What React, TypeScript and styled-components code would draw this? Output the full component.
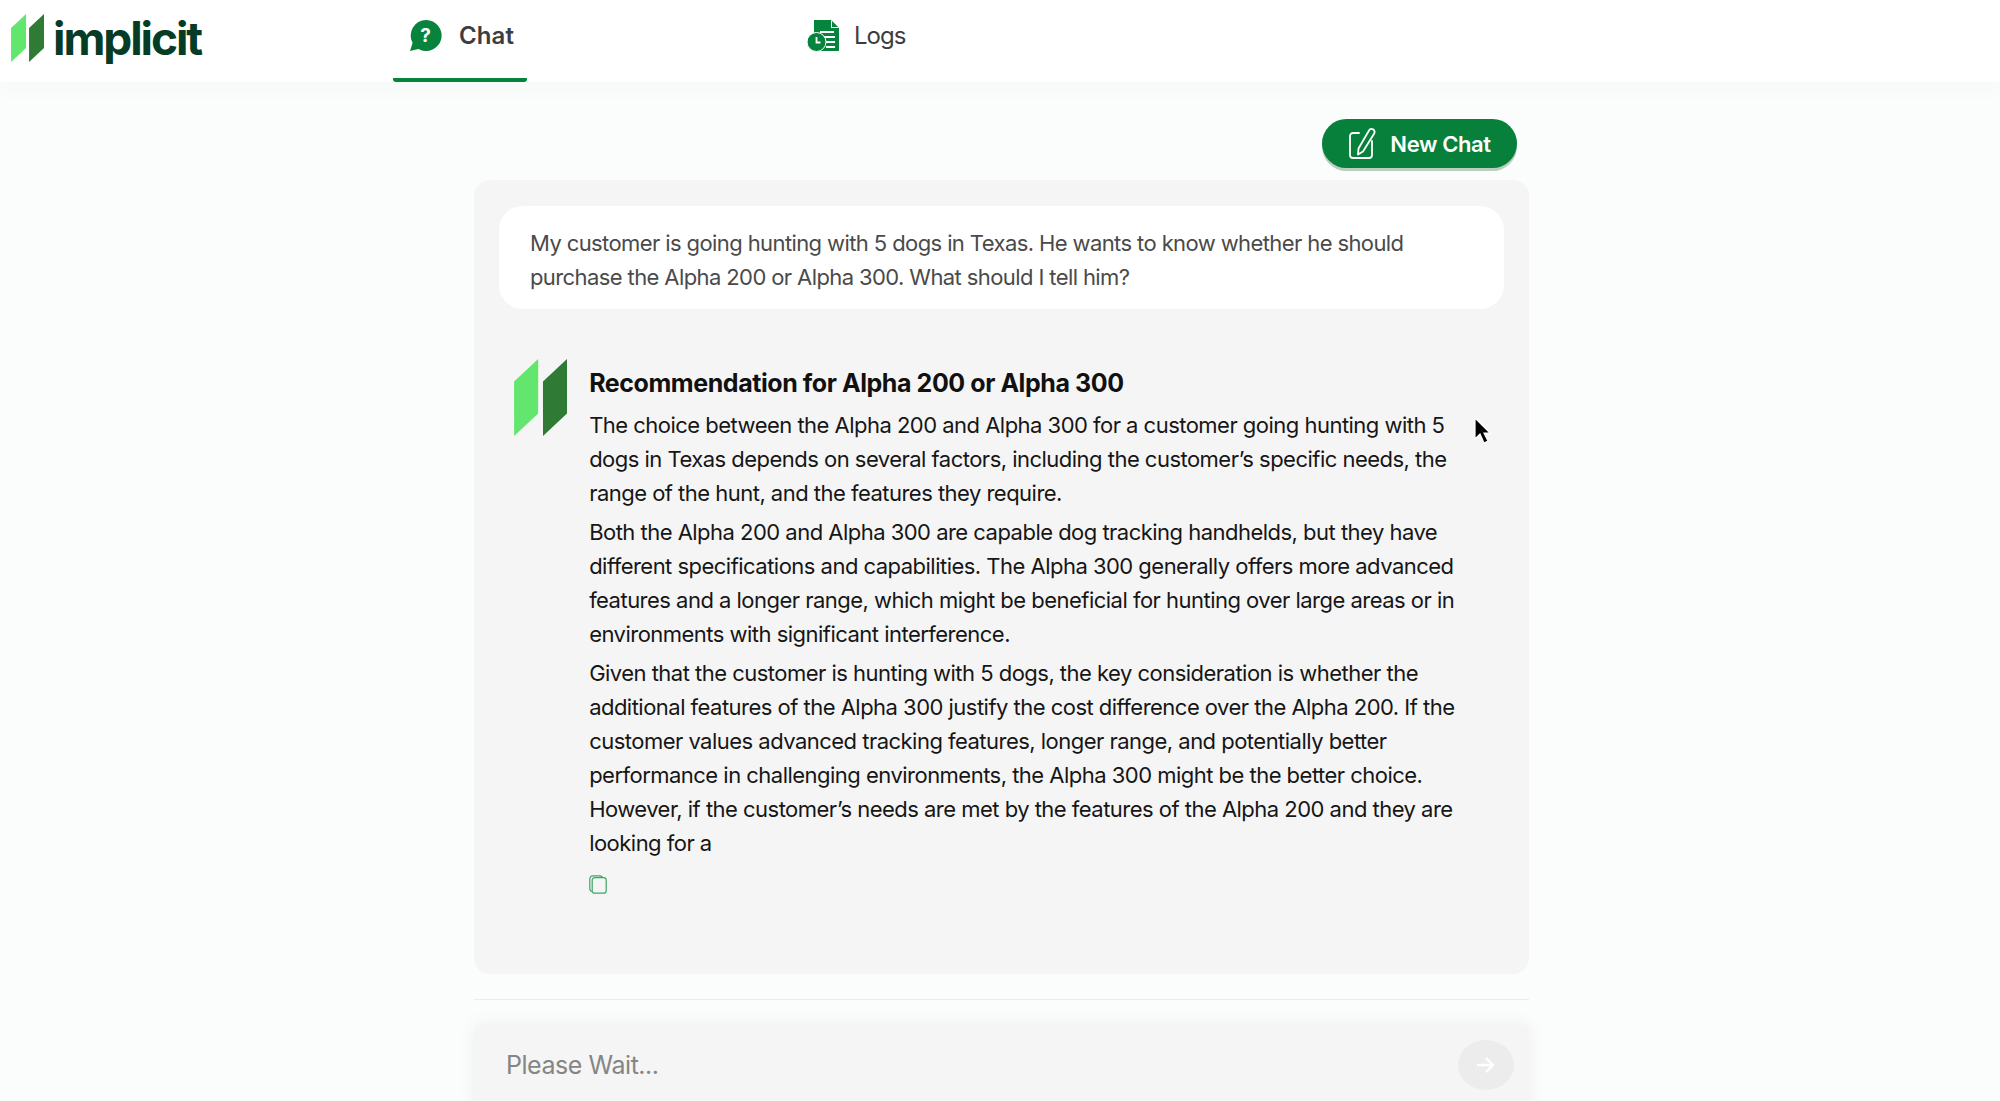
import React from 'react';
import styled, { createGlobalStyle } from 'styled-components';

const GlobalStyle = createGlobalStyle`
  html, body {
    margin: 0;
    height: 100%;
    overflow: hidden;
    background: #fbfdfc;
    font-family: Inter, "Noto Sans", "Liberation Sans", sans-serif;
  }
  * { box-sizing: border-box; }
`;

const Page = styled.div`
  height: 100vh;
  overflow: hidden;
  position: relative;
  display: flex;
  flex-direction: column;
`;

const Header = styled.header`
  height: 82px;
  flex: none;
  background: #fff;
  display: flex;
  align-items: flex-start;
  box-shadow: 0 8px 16px rgba(120, 130, 120, 0.03);
`;

const Logo = styled.div`
  width: 393px;
  flex: none;
  padding: 14px 0 0 11px;
  display: flex;
  align-items: flex-start;
  gap: 9px;
`;

const LogoText = styled.span`
  font-size: 46px;
  line-height: 48px;
  font-weight: 700;
  letter-spacing: -2.1px;
  color: #063b26;
`;

const Tab = styled.div<{ $active?: boolean }>`
  width: 134px;
  height: 82px;
  margin-right: ${p => (p.$active ? '263px' : '0')};
  padding: 0 0 8px ${p => (p.$active ? '16px' : '17px')};
  display: flex;
  align-items: center;
  gap: ${p => (p.$active ? '17px' : '14px')};
  font-size: 24px;
  font-weight: ${p => (p.$active ? 600 : 400)};
  letter-spacing: ${p => (p.$active ? '0.1px' : '-1px')};
  color: #3d3d40;
  border-bottom: 4px solid ${p => (p.$active ? '#06843d' : 'transparent')};
  border-radius: 0 0 3px 3px;
`;

const Main = styled.main`
  width: 1055px;
  margin-left: 474px;
  display: flex;
  flex-direction: column;
`;

const Toolbar = styled.div`
  height: 98px;
  padding: 37px 12px 0 0;
  display: flex;
  justify-content: flex-end;
  align-items: flex-start;
`;

const NewChatButton = styled.button`
  width: 195px;
  height: 49px;
  padding: 0;
  border: 0;
  border-radius: 25px;
  background: #06803a;
  box-shadow: 0 3px 0 rgba(60, 120, 80, 0.35);
  color: #fff;
  font: 600 22px Inter, sans-serif;
  letter-spacing: -0.4px;
  display: flex;
  align-items: center;
  justify-content: center;
  gap: 13px;
`;

const ChatPanel = styled.section`
  height: 794px;
  background: #f5f5f5;
  border-radius: 16px;
  padding: 26px 25px 0;
`;

const UserBubble = styled.div`
  height: 103px;
  background: #fff;
  border-radius: 24px;
  padding: 20px 31px;
  font-size: 22px;
  line-height: 34px;
  letter-spacing: -0.6px;
  color: #4a4a4a;
`;

const Answer = styled.div`
  margin-top: 50px;
  padding-left: 15px;
  display: flex;
  gap: 22px;
`;

const Body = styled.div`
  width: 885px;
  margin-top: 7px;
`;

const Title = styled.h2`
  margin: 0 0 8px;
  font-size: 25px;
  line-height: 34px;
  font-weight: 700;
  letter-spacing: -0.43px;
  color: #111;
`;

const Paragraph = styled.p`
  margin: 0 0 5px;
  font-size: 22px;
  line-height: 34px;
  letter-spacing: -0.52px;
  color: #161616;
`;

const CopyButton = styled.div`
  margin-top: 15px;
  width: 18px;
  height: 18px;
  line-height: 0;
`;

const Divider = styled.hr`
  margin: 25px 0;
  border: 0;
  border-top: 1px solid #ececec;
`;

const InputBar = styled.div`
  height: 100px;
  background: #f5f5f5;
  border-radius: 6px 6px 0 0;
  box-shadow: 0 0 16px rgba(120, 120, 120, 0.1);
  padding: 15px 15px 0 32px;
  display: flex;
  align-items: flex-start;
  justify-content: space-between;
`;

const Placeholder = styled.span`
  font-size: 25px;
  line-height: 50px;
  letter-spacing: -0.45px;
  color: #858585;
`;

const SendButton = styled.div`
  width: 56px;
  height: 50px;
  border-radius: 50%;
  background: #ececec;
  display: flex;
  align-items: center;
  justify-content: center;
`;

const Cursor = styled.svg`
  position: absolute;
  left: 1473px;
  top: 416px;
`;

const LogoMark = ({ size }: { size: number }) => (
  <svg width={size * 0.69} height={size} viewBox="0 0 33 48">
    <polygon points="0,14 15,0 15,34 0,48" fill="#63e66d" />
    <polygon points="18,14 33,0 33,34 18,48" fill="#2f7a35" />
  </svg>
);

const ChatIcon = () => (
  <svg width="33" height="33" viewBox="0 0 33 33">
    <path d="M17 1a15.5 15.5 0 1 1-7.5 29L1 32l2.6-8A15.5 15.5 0 0 1 17 1z" fill="#06843d" />
    <text x="16.700" y="23" textAnchor="middle" fontSize="19" fontWeight="700" fontFamily="Inter, sans-serif" fill="#fff">?</text>
  </svg>
);

const LogsIcon = () => (
  <svg width="33" height="33" viewBox="0 0 33 33">
    <path d="M7 1h17l8 8v23H11v-3H7z" fill="#06843d" />
    <path d="M24 1l8 8h-8z" fill="#fff" />
    <path d="M25 2l6 6h-6z" fill="#06843d" />
    <g stroke="#fff" strokeWidth="2">
      <path d="M13 13h14M17 18h11M19 23h9M19 28h9" />
    </g>
    <circle cx="9.500" cy="23" r="9.500" fill="#06843d" stroke="#fff" strokeWidth="1" />
    <path d="M9.500 18v5.500h4" stroke="#fff" strokeWidth="1.8" fill="none" />
  </svg>
);

const PenIcon = () => (
  <svg width="29" height="33" viewBox="0 0 29 33" fill="none" stroke="#fff" strokeWidth="1.8" strokeLinecap="round" strokeLinejoin="round">
    <path d="M11 6H5a3 3 0 0 0-3 3v19a3 3 0 0 0 3 3h16a3 3 0 0 0 3-3V14" />
    <path d="M21 3.500a3 3 0 0 1 5.200 3L15 24.500l-5 3 .5-6z" />
  </svg>
);

const CopyIcon = () => (
  <svg width="18" height="19" viewBox="0 0 18 19" fill="none" stroke="#3fa765" strokeWidth="1.2">
    <rect x="0.800" y="0.800" width="13" height="16" rx="3" />
    <rect x="3.200" y="2.600" width="14" height="15.600" rx="2.500" fill="#f5f5f5" />
  </svg>
);

const ArrowIcon = () => (
  <svg width="20" height="20" viewBox="0 0 20 20" fill="none" stroke="#fff" strokeWidth="2.4" strokeLinecap="round" strokeLinejoin="round">
    <path d="M2 10h15M10.500 3.500L17 10l-6.500 6.500" />
  </svg>
);

const paragraphs = [
  'The choice between the Alpha 200 and Alpha 300 for a customer going hunting with 5 dogs in Texas depends on several factors, including the customer\u2019s specific needs, the range of the hunt, and the features they require.',
  'Both the Alpha 200 and Alpha 300 are capable dog tracking handhelds, but they have different specifications and capabilities. The Alpha 300 generally offers more advanced features and a longer range, which might be beneficial for hunting over large areas or in environments with significant interference.',
  'Given that the customer is hunting with 5 dogs, the key consideration is whether the additional features of the Alpha 300 justify the cost difference over the Alpha 200. If the customer values advanced tracking features, longer range, and potentially better performance in challenging environments, the Alpha 300 might be the better choice. However, if the customer\u2019s needs are met by the features of the Alpha 200 and they are looking for a',
];

export default function App() {
  return (
    <Page>
      <GlobalStyle />
      <Header>
        <Logo>
          <LogoMark size={48} />
          <LogoText>implicit</LogoText>
        </Logo>
        <Tab $active>
          <ChatIcon />
          Chat
        </Tab>
        <Tab>
          <LogsIcon />
          Logs
        </Tab>
      </Header>
      <Main>
        <Toolbar>
          <NewChatButton>
            <PenIcon />
            New Chat
          </NewChatButton>
        </Toolbar>
        <ChatPanel>
          <UserBubble>
            My customer is going hunting with 5 dogs in Texas. He wants to know whether he should purchase the Alpha 200 or Alpha 300. What should I tell him?
          </UserBubble>
          <Answer>
            <LogoMark size={77} />
            <Body>
              <Title>Recommendation for Alpha 200 or Alpha 300</Title>
              {paragraphs.map(text => (
                <Paragraph key={text.slice(0, 12)}>{text}</Paragraph>
              ))}
              <CopyButton>
                <CopyIcon />
              </CopyButton>
            </Body>
          </Answer>
        </ChatPanel>
        <Divider />
        <InputBar>
          <Placeholder>Please Wait...</Placeholder>
          <SendButton>
            <ArrowIcon />
          </SendButton>
        </InputBar>
      </Main>
      <Cursor width="18" height="30" viewBox="0 0 18 30">
        <path d="M2 2v21l5-5 4 9 4-2-4-8h6z" fill="#000" stroke="#fff" strokeWidth="1.2" />
      </Cursor>
    </Page>
  );
}
